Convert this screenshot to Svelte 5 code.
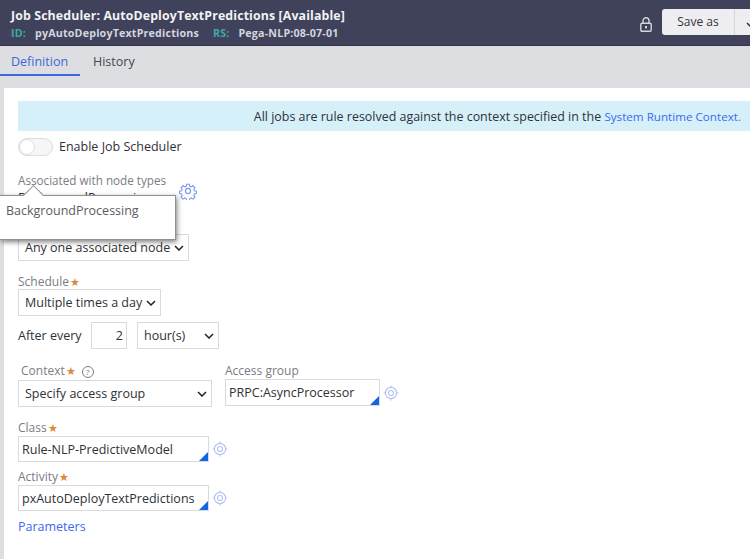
<script>
  const target = "M12 2v3.5M12 18.5V22M2 12h3.5M18.5 12H22";
</script>

<div class="page">
  <header class="head">
    <div class="titles">
      <div class="title">Job Scheduler: AutoDeployTextPredictions [Available]</div>
      <div class="meta">
        <span class="key">ID:</span><span class="val">pyAutoDeployTextPredictions</span>
        <span class="key rs">RS:</span><span class="val">Pega-NLP:08-07-01</span>
      </div>
    </div>
    <div class="actions">
      <svg class="lock" width="12" height="15" viewBox="0 0 12 15" fill="none">
        <path d="M3 6.5V3.8a3 3 0 0 1 6 0v2.7" stroke="#d5d6dc" stroke-width="1.4"/>
        <rect x="0.8" y="6.3" width="10.4" height="8" rx="1.2" stroke="#d5d6dc" stroke-width="1.4"/>
        <rect x="5" y="9" width="2" height="2.4" fill="#d5d6dc"/>
      </svg>
      <div class="split">
        <span class="save">Save as</span>
        <span class="caret">
          <svg width="10" height="6" viewBox="0 0 10 6" fill="none"><path d="M1 1l4 4 4-4" stroke="#333" stroke-width="1.5"/></svg>
        </span>
      </div>
    </div>
  </header>

  <nav class="tabs">
    <span class="tab active">Definition</span>
    <span class="tab hist">History</span>
  </nav>

  <main class="panel">
    <div class="banner">
      <span>All jobs are rule resolved against the context specified in the <a href="#top">System Runtime Context.</a></span>
    </div>

    <div class="toggle-row">
      <span class="toggle"><span class="knob"></span></span>
      <span class="toggle-text">Enable Job Scheduler</span>
    </div>

    <div class="assoc">
      <div class="label assoc-label">Associated with node types</div>
      <div class="assoc-row">
        <span class="value">BackgroundProcessing</span>
        <svg class="gear" width="18" height="18" viewBox="0 0 24 24" fill="none" stroke="#7d9cf0" stroke-width="1.6">
          <circle cx="12" cy="12" r="3.4"/>
          <path d="M10 2.5h4l.6 2.9 1.9.8 2.5-1.6 2.8 2.8-1.6 2.5.8 1.9 2.9.6v3.2l-2.9.6-.8 1.9 1.6 2.5-2.8 2.8-2.5-1.6-1.9.8-.6 2.9h-4l-.6-2.9-1.9-.8-2.5 1.6-2.8-2.8 1.6-2.5-.8-1.9-2.9-.6v-3.2l2.9-.6.8-1.9-1.6-2.5L5 4.6l2.5 1.6 1.9-.8z" transform="translate(0.6 0.6) scale(.95)"/>
        </svg>
      </div>
      <div class="tip">
        <span class="arrow"></span>
        <span class="tip-text">BackgroundProcessing</span>
      </div>
    </div>

    <div class="box select node">
      <span>Any one associated node</span>
      <svg class="chev" width="10" height="6" viewBox="0 0 10 6" fill="none"><path d="M1 1l4 4 4-4" stroke="#222" stroke-width="1.5"/></svg>
    </div>

    <div class="label sched">Schedule<span class="star">★</span></div>
    <div class="box select times">
      <span>Multiple times a day</span>
      <svg class="chev" width="10" height="6" viewBox="0 0 10 6" fill="none"><path d="M1 1l4 4 4-4" stroke="#222" stroke-width="1.5"/></svg>
    </div>

    <div class="every">
      <span class="every-text">After every</span>
      <div class="box num">2</div>
      <div class="box select hours">
        <span>hour(s)</span>
        <svg class="chev" width="10" height="6" viewBox="0 0 10 6" fill="none"><path d="M1 1l4 4 4-4" stroke="#222" stroke-width="1.5"/></svg>
      </div>
    </div>

    <div class="context">
      <div class="ctx-col">
        <div class="label ctx-label">Context<span class="star">★</span>
          <span class="help">?</span>
        </div>
        <div class="box select ctx">
          <span>Specify access group</span>
          <svg class="chev" width="10" height="6" viewBox="0 0 10 6" fill="none"><path d="M1 1l4 4 4-4" stroke="#222" stroke-width="1.5"/></svg>
        </div>
      </div>
      <div class="ag-col">
        <div class="label">Access group</div>
        <div class="with-icon">
          <div class="box auto ag">PRPC:AsyncProcessor</div>
          <svg class="target" width="18" height="18" viewBox="0 0 24 24" fill="none" stroke="#b4c5f4" stroke-width="1.5">
            <circle cx="12" cy="12" r="7.5"/><circle cx="12" cy="12" r="3.4"/><path d={target}/>
          </svg>
        </div>
      </div>
    </div>

    <div class="label cls">Class<span class="star">★</span></div>
    <div class="with-icon">
      <div class="box auto wide">Rule-NLP-PredictiveModel</div>
      <svg class="target" width="18" height="18" viewBox="0 0 24 24" fill="none" stroke="#b4c5f4" stroke-width="1.5">
        <circle cx="12" cy="12" r="7.5"/><circle cx="12" cy="12" r="3.4"/><path d={target}/>
      </svg>
    </div>

    <div class="label act">Activity<span class="star">★</span></div>
    <div class="with-icon">
      <div class="box auto wide">pxAutoDeployTextPredictions</div>
      <svg class="target" width="18" height="18" viewBox="0 0 24 24" fill="none" stroke="#b4c5f4" stroke-width="1.5">
        <circle cx="12" cy="12" r="7.5"/><circle cx="12" cy="12" r="3.4"/><path d={target}/>
      </svg>
    </div>

    <a class="params" href="#top">Parameters</a>
  </main>
</div>

<style>
  :global(body) {
    margin: 0;
    background: #fff;
  }
  .page {
    width: 750px;
    height: 559px;
    overflow: hidden;
    display: flex;
    flex-direction: column;
    font-family: "Open Sans", "Liberation Sans", sans-serif;
    font-size: 13px;
    color: #2f3136;
    background: #dddee2;
  }
  .head {
    height: 46px;
    flex: none;
    box-sizing: border-box;
    background: #40415a;
    border-bottom: 1px solid #33344a;
    display: flex;
    justify-content: space-between;
    padding: 7px 0 0 11px;
  }
  .title {
    color: #f2f2f5;
    font-size: 12.35px;
    font-weight: 700;
    line-height: 18px;
    letter-spacing: 0.12px;
  }
  .meta {
    margin-top: 1px;
    font-size: 10.7px;
    font-weight: 700;
    line-height: 14px;
    letter-spacing: 0.18px;
    white-space: pre;
  }
  .key {
    color: #3fa9a1;
    margin-right: 9px;
  }
  .key.rs {
    margin-left: 11px;
    margin-right: 9px;
  }
  .val {
    color: #d3d5df;
  }
  .actions {
    display: flex;
    align-items: flex-start;
  }
  .lock {
    margin: 10px 10px 0 0;
  }
  .split {
    margin-top: 2px;
    display: flex;
    width: 88px;
    height: 26px;
    background: #eeeef1;
    border-radius: 3px 0 0 3px;
  }
  .save {
    flex: none;
    width: 72px;
    text-align: center;
    line-height: 26px;
    font-size: 12px;
    color: #33343c;
    border-right: 1px solid #d5d6da;
  }
  .caret {
    padding: 5px 0 0 11px;
  }
  .tabs {
    height: 42px;
    flex: none;
    display: flex;
  }
  .tab {
    font-size: 12.5px;
    line-height: 31px;
    height: 30px;
    box-sizing: border-box;
    color: #45464e;
  }
  .active {
    color: #3f66d6;
    border-bottom: 2px solid #3f66e0;
    width: 80px;
    padding-left: 11px;
  }
  .hist {
    margin-left: 13px;
  }
  .panel {
    flex: 1;
    margin-left: 4px;
    background: #fff;
    padding: 13px 0 0 14px;
    position: relative;
    display: flex;
    flex-direction: column;
    align-items: flex-start;
  }
  .banner {
    align-self: stretch;
    height: 30px;
    background: #d6f0fa;
    display: flex;
    align-items: center;
    justify-content: flex-end;
    padding-right: 9px;
    font-size: 12.45px;
  }
  .banner a {
    font-size: 11.65px;
  }
  a {
    color: #3d68f0;
    text-decoration: none;
  }
  .toggle-row {
    margin-top: 7px;
    display: flex;
    align-items: center;
    gap: 6px;
    height: 18px;
    font-size: 12.5px;
  }
  .toggle-text {
    margin-bottom: 2px;
  }
  .toggle {
    width: 35px;
    height: 18px;
    box-sizing: border-box;
    border: 1px solid #dcdde0;
    border-radius: 9px;
    background: #f6f6f7;
    display: block;
  }
  .knob {
    display: block;
    width: 16px;
    height: 16px;
    border-radius: 50%;
    background: #fff;
    border: 1px solid #dcdde0;
    box-sizing: border-box;
  }
  .label {
    color: #7b7c83;
    font-size: 12px;
    line-height: 16px;
  }
  .assoc-label {
    font-size: 11.7px;
  }
  .star {
    color: #d98a3a;
    font-size: 11px;
    margin-left: 1px;
  }
  .assoc {
    margin-top: 16px;
    position: relative;
    height: 62px;
  }
  .assoc-row {
    display: flex;
    gap: 28px;
    align-items: flex-start;
    margin-top: 1px;
  }
  .value {
    font-size: 12.5px;
    line-height: 17px;
  }
  .gear {
    margin-top: -7px;
  }
  .tip {
    position: absolute;
    left: -18px;
    top: 23px;
    width: 176px;
    height: 45px;
    box-sizing: border-box;
    background: #fff;
    border: 1px solid #8f9094;
    border-left: 0;
    box-shadow: 1px 2px 5px rgba(0, 0, 0, 0.5);
    padding: 6px 0 0 6px;
    font-size: 12.5px;
    color: #5b5c63;
    line-height: 17px;
  }
  .tip-text {
    position: relative;
  }
  .arrow {
    position: absolute;
    left: 26px;
    top: -8px;
    width: 14px;
    height: 14px;
    transform: rotate(45deg);
    background: #fff;
    border-left: 1px solid #8f9094;
    border-top: 1px solid #8f9094;
  }
  .box {
    box-sizing: border-box;
    height: 27px;
    border: 1px solid #d9dade;
    background: #fff;
    font-size: 12.5px;
    line-height: 25px;
    color: #2f3136;
    white-space: nowrap;
  }
  .select {
    display: flex;
    align-items: center;
    justify-content: space-between;
    padding: 0 4px 0 6px;
  }
  .chev {
    flex: none;
  }
  .node {
    width: 171px;
  }
  .sched {
    margin-top: 13px;
  }
  .times {
    width: 143px;
    margin-top: -1px;
  }
  .every {
    margin-top: 6px;
    display: flex;
    align-items: center;
  }
  .every-text {
    width: 73px;
    font-size: 12.5px;
  }
  .num {
    width: 36px;
    text-align: right;
    padding-right: 3px;
  }
  .hours {
    width: 82px;
    margin-left: 10px;
  }
  .context {
    margin-top: 14px;
    display: flex;
  }
  .ctx-col {
    width: 207px;
  }
  .ctx-label {
    padding-left: 3px;
    display: flex;
    align-items: center;
  }
  .ctx-label .star {
    margin-right: 6px;
  }
  .help {
    width: 10px;
    height: 10px;
    margin-top: 2px;
    border: 1px solid #7b7c83;
    border-radius: 50%;
    font-size: 8px;
    line-height: 10px;
    text-align: center;
  }
  .ctx {
    width: 194px;
    margin-top: 1px;
  }
  .with-icon {
    display: flex;
    align-items: center;
    gap: 2px;
  }
  .auto {
    position: relative;
    padding-left: 3px;
    overflow: hidden;
  }
  .auto::after {
    content: "";
    position: absolute;
    right: 0;
    bottom: 0;
    border-style: solid;
    border-width: 0 0 9px 9px;
    border-color: transparent transparent #1266e6 transparent;
  }
  .ag {
    width: 155px;
  }
  .wide {
    width: 191px;
    height: 26px;
    line-height: 26px;
  }
  .cls {
    margin-top: 13px;
  }
  .act {
    margin-top: 7px;
  }
  .params {
    margin-top: 7px;
    font-size: 12.5px;
    line-height: 18px;
  }
</style>
